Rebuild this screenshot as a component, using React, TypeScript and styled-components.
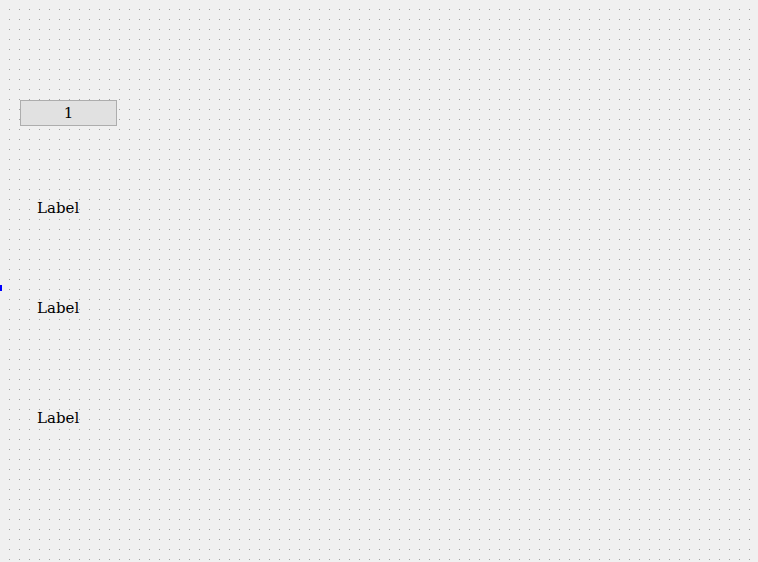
import styled, { createGlobalStyle } from "styled-components";

const GlobalStyle = createGlobalStyle`
    html, body {
        margin: 0;
        padding: 0;
        background: #f0f0f0;
    }
`;

const dotGrid =
    "data:image/svg+xml," +
    encodeURIComponent(
        "<svg xmlns='http://www.w3.org/2000/svg' width='10' height='10'><rect x='9' y='9' width='1' height='1' fill='#a0a0a0'/></svg>"
    );

// 폼 캔버스 (점 격자)
const FormCanvas = styled.div`
    position: relative;
    width: 758px;
    height: 562px;
    box-sizing: border-box;
    padding: 100px 0 0 20px;
    display: flex;
    flex-direction: column;
    align-items: flex-start;
    background-color: #f0f0f0;
    background-image: url("${dotGrid}");
    background-size: 10px 10px;
    background-position: 0 0;
    overflow: hidden;
    font-family: "DejaVu Serif", "Liberation Serif", serif;
    font-size: 15px;
    color: #000;
`;

const PushButton = styled.button`
    width: 97px;
    height: 26px;
    box-sizing: border-box;
    margin: 0;
    padding: 0;
    border: 1px solid #adadad;
    background: #e1e1e1;
    font-family: inherit;
    font-size: 15px;
    line-height: 24px;
    color: #000;
    text-align: center;
`;

const Label = styled.div<{ $gap: number }>`
    margin-top: ${(p) => p.$gap}px;
    margin-left: 17px;
    line-height: 20px;
    height: 20px;
`;

// 선택 마커
const SideMarker = styled.div`
    position: absolute;
    left: 0;
    top: 285px;
    width: 2px;
    height: 6px;
    background: #0000ff;
`;

const App = () => {
    const gaps = [72, 80, 90];

    return (
        <>
            <GlobalStyle />
            <FormCanvas>
                <PushButton>1</PushButton>
                {gaps.map((gap, i) => (
                    <Label key={i} $gap={gap}>
                        Label
                    </Label>
                ))}
                <SideMarker />
            </FormCanvas>
        </>
    );
};

export default App;
